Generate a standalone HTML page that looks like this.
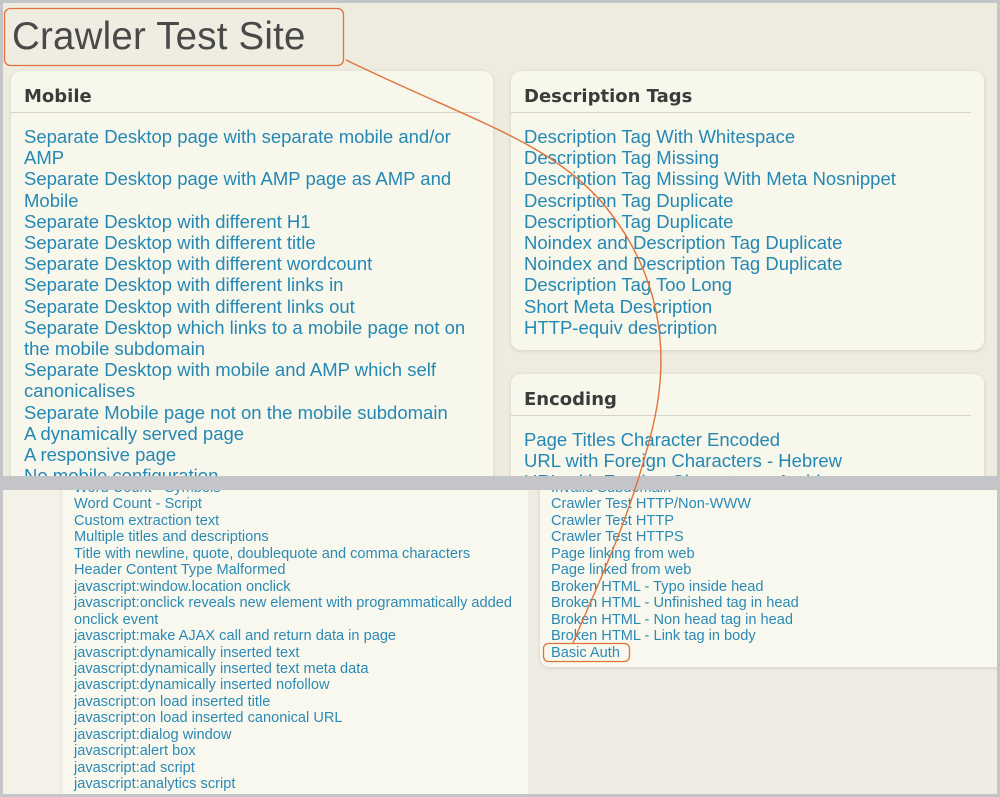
<!DOCTYPE html>
<html><head><meta charset="utf-8"><style>
*{margin:0;padding:0;box-sizing:border-box}
html,body{width:1000px;height:797px;overflow:hidden;background:#c3c5c8;font-family:"Liberation Sans",sans-serif}
#top{position:absolute;left:3px;top:3px;width:994px;height:473px;background:#eeebdf;overflow:hidden}
#bot{position:absolute;left:3px;top:490px;width:994px;height:304px;background:#efede3;overflow:hidden}
.panel{position:absolute;background:#f8f7ec;border-radius:10px;box-shadow:0 1px 4px rgba(0,0,0,.12)}
.panel h2{font-family:"DejaVu Sans",sans-serif;font-size:18px;font-weight:bold;color:#3b3b3b;padding:15px 0 0 13px;height:42px;border-bottom:1px solid #d6d3c8;margin:0 13px 0 0}
.panel ul{list-style:none;padding:13px 13px 0 13px}
.big li{font-size:18.5px;line-height:21.2px;color:#2488b4}
.sm li{font-size:14.6px;line-height:16.45px;color:#2b8ab5}
h1{position:absolute;left:9px;top:12px;font-size:38.5px;font-weight:normal;color:#3a3a3a;letter-spacing:0.2px}
</style></head><body>
<div id="top">
<h1>Crawler Test Site</h1>
<div class="panel big" style="left:8px;top:68px;width:482px;height:420px">
<h2>Mobile</h2>
<ul>
<li>Separate Desktop page with separate mobile and/or AMP</li>
<li>Separate Desktop page with AMP page as AMP and Mobile</li>
<li>Separate Desktop with different H1</li>
<li>Separate Desktop with different title</li>
<li>Separate Desktop with different wordcount</li>
<li>Separate Desktop with different links in</li>
<li>Separate Desktop with different links out</li>
<li>Separate Desktop which links to a mobile page not on the mobile subdomain</li>
<li>Separate Desktop with mobile and AMP which self canonicalises</li>
<li>Separate Mobile page not on the mobile subdomain</li>
<li>A dynamically served page</li>
<li>A responsive page</li>
<li>No mobile configuration</li>
</ul></div>
<div class="panel big" style="left:508px;top:68px;width:473px;height:279px">
<h2>Description Tags</h2>
<ul>
<li>Description Tag With Whitespace</li>
<li>Description Tag Missing</li>
<li>Description Tag Missing With Meta Nosnippet</li>
<li>Description Tag Duplicate</li>
<li>Description Tag Duplicate</li>
<li>Noindex and Description Tag Duplicate</li>
<li>Noindex and Description Tag Duplicate</li>
<li>Description Tag Too Long</li>
<li>Short Meta Description</li>
<li>HTTP-equiv description</li>
</ul></div>
<div class="panel big" style="left:508px;top:371px;width:473px;height:200px">
<h2>Encoding</h2>
<ul>
<li>Page Titles Character Encoded</li>
<li>URL with Foreign Characters - Hebrew</li>
<li>URL with Foreign Characters - Arabic</li>
</ul></div>
</div>
<div id="bot">
<div style="position:absolute;left:0;top:0;width:56px;height:304px;background:#f3f1e8"></div>
<div class="panel sm" style="left:60px;top:-20px;width:465px;height:340px;border-radius:0;box-shadow:none;background:#f9f8ee">
<ul style="padding:10px 0 0 11px">
<li>Word Count - Symbols</li>
<li>Word Count - Script</li>
<li>Custom extraction text</li>
<li>Multiple titles and descriptions</li>
<li>Title with newline, quote, doublequote and comma characters</li>
<li>Header Content Type Malformed</li>
<li>javascript:window.location onclick</li>
<li>javascript:onclick reveals new element with programmatically added onclick event</li>
<li>javascript:make AJAX call and return data in page</li>
<li>javascript:dynamically inserted text</li>
<li>javascript:dynamically inserted text meta data</li>
<li>javascript:dynamically inserted nofollow</li>
<li>javascript:on load inserted title</li>
<li>javascript:on load inserted canonical URL</li>
<li>javascript:dialog window</li>
<li>javascript:alert box</li>
<li>javascript:ad script</li>
<li>javascript:analytics script</li>
<li>javascript:iframe in head script</li>
</ul></div>
<div class="panel sm" style="left:537px;top:-20px;width:470px;height:197px;background:#f9f8ee">
<ul style="padding:10px 0 0 11px">
<li>Invalid Subdomain</li>
<li>Crawler Test HTTP/Non-WWW</li>
<li>Crawler Test HTTP</li>
<li>Crawler Test HTTPS</li>
<li>Page linking from web</li>
<li>Page linked from web</li>
<li>Broken HTML - Typo inside head</li>
<li>Broken HTML - Unfinished tag in head</li>
<li>Broken HTML - Non head tag in head</li>
<li>Broken HTML - Link tag in body</li>
<li>Basic Auth</li>
</ul></div>
</div>
<svg width="1000" height="797" style="position:absolute;left:0;top:0" fill="none">
<rect x="4.5" y="8.5" width="339" height="57" rx="6" stroke="#e0733a" stroke-width="1.3" fill="rgba(255,255,255,0.08)"/>
<rect x="543.5" y="643.5" width="86" height="18" rx="5" stroke="#e0733a" stroke-width="1.3"/>
<path d="M346,60 C 470,120 545,140 600,200 C 660,270 672,350 652,430 C 630,520 595,590 573,643" stroke="#e0733a" stroke-width="1.4"/>
</svg>
</body></html>
